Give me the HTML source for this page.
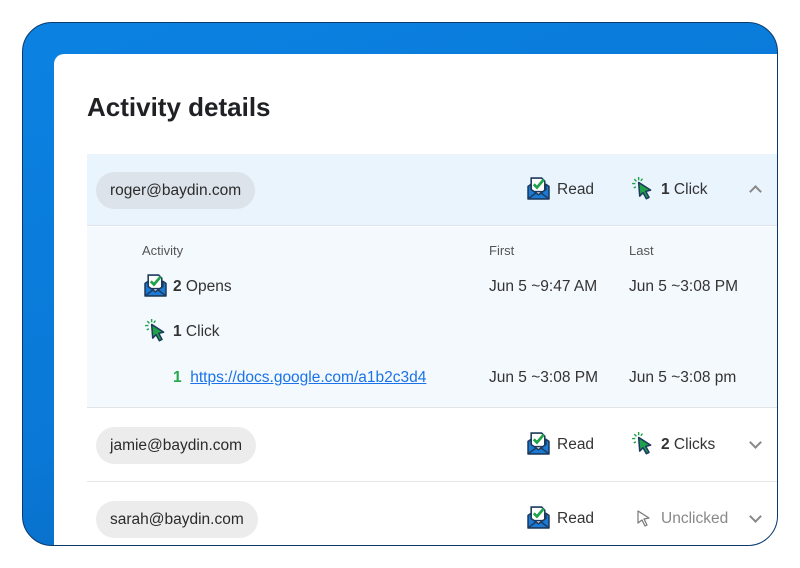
<!DOCTYPE html>
<html><head><style>
*{margin:0;padding:0;box-sizing:border-box}
body{width:800px;height:568px;background:#fff;position:relative;overflow:hidden;font-family:"Liberation Sans",Roboto,sans-serif;color:#333}
.frame{position:absolute;left:22px;top:22px;width:756px;height:524px;border-radius:30px;background:linear-gradient(160deg,#0b82e2 0%,#0a78d6 55%,#0662b4 100%);border:1.5px solid #0d3a6b;overflow:hidden}
.card{position:absolute;left:31px;top:31px;width:724px;height:492px;background:#fff;border-top-left-radius:10px;overflow:hidden}
h1{position:absolute;left:33px;top:38px;font-size:26px;font-weight:bold;color:#202124}
.row{position:absolute;left:33px;width:700px}
.pill{position:absolute;left:9px;height:37px;border-radius:19px;padding:0 14px;line-height:37px;font-size:15.5px;color:#2b2b2b}
.abs{position:absolute;font-size:15.5px;color:#333;white-space:nowrap}
.hdr{font-size:13px;color:#555}
.chev{position:absolute;width:9px;height:9px;border-right:2px solid #888;border-bottom:2px solid #888}
a{color:#1a73e8;text-decoration:underline}
</style></head><body>
<div class="frame"><div class="card">
<h1>Activity details</h1>
<div class="row" style="top:100px;height:72px;background:#eaf4fd;border-bottom:1px solid #dde6ee">
 <div class="pill" style="top:18px;background:#dce3ea">roger@baydin.com</div>
</div>
<div class="row" style="top:173px;height:181px;background:#f4f9fe;border-bottom:1px solid #e3e3e3"></div>
<div class="row" style="top:355px;height:73px;border-bottom:1px solid #e6e6e6">
 <div class="pill" style="top:18px;background:#ececec">jamie@baydin.com</div>
</div>
<div class="row" style="top:429px;height:70px">
 <div class="pill" style="top:18px;background:#ececec">sarah@baydin.com</div>
</div>
</div></div>

<svg width="0" height="0" style="position:absolute"><defs>
<symbol id="env" viewBox="0 0 22 22"><path d="M4 1h10l3 3v10H4z" fill="#fff" stroke="#1d3a5c" stroke-width="1.5"/><path d="M6.5 7l3 3L16 2.5" fill="none" stroke="#1fa34a" stroke-width="2.6"/><path d="M1 9l3-2v5l7 5 7-5V7l3 2v12H1z" fill="#1a7ad6" stroke="#1d3a5c" stroke-width="1.5" stroke-linejoin="round"/><path d="M1.5 20.5l7.5-5.5M20.5 20.5L13 15" stroke="#1d3a5c" stroke-width="1.4"/></symbol>
<symbol id="cur" viewBox="0 0 20 22"><path d="M6 5l11 7-4.5 1.2 3 5.5-2.4 1.2-3-5.5L7 17.5z" fill="#1fa34a" stroke="#1d3a5c" stroke-width="1.4" stroke-linejoin="round"/><path d="M2 2l2 2M6 0v3M0 6h3M1.5 10l2-1M9.5 1.5l-1.5 2" stroke="#1fa34a" stroke-width="1.3"/></symbol>
</defs></svg>

<svg class="abs" style="left:527px;top:177px" width="23" height="23"><use href="#env"/></svg>
<div class="abs" style="left:557px;top:181px">Read</div>
<svg class="abs" style="left:632px;top:177px" width="22" height="24"><use href="#cur"/></svg>
<div class="abs" style="left:661px;top:181px"><b>1</b> Click</div>
<div class="chev" style="left:751px;top:187px;transform:rotate(-135deg)"></div>

<div class="abs hdr" style="left:142px;top:243px">Activity</div>
<div class="abs hdr" style="left:489px;top:243px">First</div>
<div class="abs hdr" style="left:629px;top:243px">Last</div>
<svg class="abs" style="left:144px;top:274px" width="23" height="23"><use href="#env"/></svg>
<div class="abs" style="left:173px;top:278px"><b>2</b> Opens</div>
<div class="abs" style="left:489px;top:278px">Jun 5 ~9:47 AM</div>
<div class="abs" style="left:629px;top:278px">Jun 5 ~3:08 PM</div>
<svg class="abs" style="left:145px;top:319px" width="22" height="24"><use href="#cur"/></svg>
<div class="abs" style="left:173px;top:323px"><b>1</b> Click</div>
<div class="abs" style="left:173px;top:369px"><b style="color:#22a84a">1</b>&nbsp; <a>https://docs.google.com/a1b2c3d4</a></div>
<div class="abs" style="left:489px;top:369px">Jun 5 ~3:08 PM</div>
<div class="abs" style="left:629px;top:369px">Jun 5 ~3:08 pm</div>

<svg class="abs" style="left:527px;top:432px" width="23" height="23"><use href="#env"/></svg>
<div class="abs" style="left:557px;top:436px">Read</div>
<svg class="abs" style="left:632px;top:432px" width="22" height="24"><use href="#cur"/></svg>
<div class="abs" style="left:661px;top:436px"><b>2</b> Clicks</div>
<div class="chev" style="left:751px;top:438px;transform:rotate(45deg)"></div>

<svg class="abs" style="left:527px;top:506px" width="23" height="23"><use href="#env"/></svg>
<div class="abs" style="left:557px;top:510px">Read</div>
<svg class="abs" style="left:636px;top:510px" width="16" height="18" viewBox="0 0 16 18"><path d="M2 1l11 7-5 1 3 6-2 1-3-6-4 3z" fill="#fff" stroke="#777" stroke-width="1.2" stroke-linejoin="round"/></svg>
<div class="abs" style="left:661px;top:510px;color:#888">Unclicked</div>
<div class="chev" style="left:751px;top:512px;transform:rotate(45deg)"></div>
</body></html>
